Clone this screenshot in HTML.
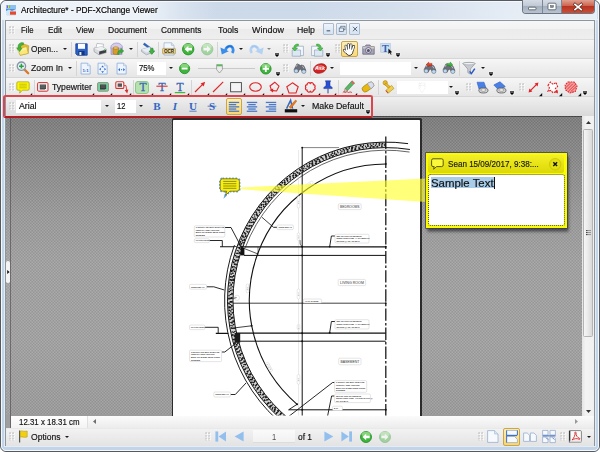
<!DOCTYPE html>
<html><head><meta charset="utf-8"><title>Architecture* - PDF-XChange Viewer</title>
<style>
*{box-sizing:border-box;margin:0;padding:0}
html,body{width:600px;height:452px;overflow:hidden;background:#fff}
body{position:relative;font-family:"Liberation Sans","DejaVu Sans",sans-serif;font-size:8.9px;color:#151515}
.a,.t,svg{position:absolute}
svg{overflow:visible}
#win{left:0;top:0;width:600px;height:452px;border:1px solid #565a60;border-radius:6px;background:linear-gradient(180deg,#ccd9e9 0,#cddae9 18px,#c6d6e8 40px,#c3d4e8 100%)}
#winhi{left:1px;top:1px;width:598px;height:450px;border:1px solid #f4f9fd;border-radius:5px}
#client{left:5px;top:20px;width:590px;height:426px;background:#efefef;border:1px solid #8d959d;box-shadow:0 0 0 1px rgba(238,244,250,0.75)}
.row{left:6px;width:588px}
.t{white-space:nowrap;line-height:12px;transform-origin:0 50%;-webkit-text-stroke:0.18px currentColor}
.grip{width:6px;height:8.4px;background:radial-gradient(circle at 1.1px 1.1px,#cdcdcd 0.7px,transparent 1.1px) 0 0/3px 2.8px,radial-gradient(circle at 1.8px 1.8px,#fff 0.75px,transparent 1.15px) 0 0/3px 2.8px}
.sep{width:1px;background:#d4d4d4;height:15px}
.dd{width:0;height:0;border-left:2.4px solid transparent;border-right:2.4px solid transparent;border-top:2.8px solid #1a1a1a}
.chev{width:4px;height:4.2px;background:linear-gradient(180deg,#555 0,#555 1.8px,transparent 1.8px);filter:drop-shadow(0 0 0.8px #fff)}.chev:after{content:'';position:absolute;left:0;top:1.7px;border-left:2px solid transparent;border-right:2px solid transparent;border-top:2.5px solid #000}
.box{background:#fff}
</style></head>
<body>
<div id="win" class="a"></div><div id="winhi" class="a"></div>
<div class="a" style="left:2px;top:2px;width:215px;height:18px;background:linear-gradient(90deg,rgba(240,245,250,0.95) 0,rgba(238,243,249,0.92) 145px,rgba(225,234,244,0.6) 180px,rgba(205,218,233,0) 215px);border-radius:4px 0 0 0;"></div>
<div class="a" style="left:300px;top:2px;width:297px;height:17px;background:linear-gradient(90deg,rgba(232,238,246,0) 0,rgba(232,238,246,0.35) 110px,rgba(234,240,247,0.85) 215px,rgba(234,240,247,0.9) 100%);border-radius:0 4px 0 0;"></div>
<div class="a" style="left:2px;top:18.6px;width:596px;height:1.4px;background:rgba(236,241,247,0.85);"></div>
<svg style="left:6.4px;top:5px" width="10" height="10.4" viewBox="0 0 10 10.4"><rect x="0" y="0.3" width="10" height="10" rx="1" fill="#8a98a8" opacity="0.5"/><rect x="0" y="0" width="10" height="10" rx="1" fill="#4f90d8"/><rect x="0" y="0" width="10" height="4" fill="#8cc0ee"/><rect x="1" y="0.5" width="1" height="2.5" fill="#a050d0"/><rect x="2" y="0.5" width="1" height="2.5" fill="#e8d840"/><rect x="3" y="0.5" width="1" height="2.5" fill="#60c860"/><path d="M0 6 L3 4.5 L6 6 L10 4 V10 H0Z" fill="#cfe6f8"/><rect x="4" y="6.5" width="6" height="3.2" fill="#e8482c"/></svg>
<div class="t" style="left:21px;top:4.3px;font-size:8.9px;transform:scaleX(0.937);color:#000;text-shadow:0 0 3px #fff,0 0 5px #fff;">Architecture* - PDF-XChange Viewer</div>
<div class="a" style="left:522px;top:0;width:73px;height:14px;border:1px solid #6c7683;border-top:none;border-radius:0 0 4px 4px;overflow:hidden;background:#c9d3df"><div class="a" style="left:0;top:0;width:20px;height:13px;background:linear-gradient(180deg,#d6dce5 0,#c0c9d5 45%,#a5b0bf 50%,#b9c3d0 100%);border-right:1px solid #7a8694"></div><div class="a" style="left:20px;top:0;width:19px;height:13px;background:linear-gradient(180deg,#d6dce5 0,#c0c9d5 45%,#a5b0bf 50%,#b9c3d0 100%);border-right:1px solid #7a8694"></div><div class="a" style="left:39px;top:0;width:33px;height:13px;background:linear-gradient(180deg,#e0a090 0,#cc6450 45%,#b83420 50%,#c8503a 100%)"></div></div>
<svg style="left:522px;top:0px" width="73" height="14" viewBox="0 0 73 14"><rect x="6.5" y="7.2" width="7.5" height="2.6" rx="0.8" fill="#fff" stroke="#4c5560" stroke-width="0.8"/><rect x="26" y="3.2" width="8" height="6.6" rx="1" fill="#fff" stroke="#4c5560" stroke-width="0.8"/><rect x="28.6" y="5.6" width="2.8" height="1.8" fill="#7d8896" stroke="#4c5560" stroke-width="0.5"/><path d="M53 4.4 L59.2 9.6 M59.2 4.4 L53 9.6" stroke="#5a2a24" stroke-width="3" stroke-linecap="square"/><path d="M53 4.4 L59.2 9.6 M59.2 4.4 L53 9.6" stroke="#fff" stroke-width="1.7" stroke-linecap="square"/></svg>
<div id="client" class="a"></div>
<div class="a row" style="left:6px;top:21px;width:588px;height:18.5px;background:linear-gradient(180deg,#f7f7f7 0,#f2f2f2 42%,#ebebeb 44%,#eeeeee 100%);border-bottom:1px solid #dcdcdc;"></div>
<div class="a row" style="left:6px;top:39.5px;width:588px;height:19px;background:linear-gradient(180deg,#f6f6f6,#e6e6e6);border-bottom:1px solid #d6d6d6;"></div>
<div class="a row" style="left:6px;top:58.5px;width:588px;height:19px;background:linear-gradient(180deg,#f6f6f6,#e6e6e6);border-bottom:1px solid #d6d6d6;"></div>
<div class="a row" style="left:6px;top:77.5px;width:588px;height:19px;background:linear-gradient(180deg,#f6f6f6,#e6e6e6);border-bottom:1px solid #d6d6d6;"></div>
<div class="a row" style="left:6px;top:96.5px;width:588px;height:20px;background:linear-gradient(180deg,#efefef,#d9d9d9);border-bottom:1px solid #c8c8c8;"></div>
<div class="a grip" style="left:8.6px;top:25.7px;"></div>
<div class="t" style="left:20.5px;top:24.3px;font-size:8.9px;transform:scaleX(0.872);">File</div>
<div class="t" style="left:47.5px;top:24.3px;font-size:8.9px;transform:scaleX(0.913);">Edit</div>
<div class="t" style="left:75.5px;top:24.3px;font-size:8.9px;transform:scaleX(0.941);">View</div>
<div class="t" style="left:107.5px;top:24.3px;font-size:8.9px;transform:scaleX(0.962);">Document</div>
<div class="t" style="left:161px;top:24.3px;font-size:8.9px;transform:scaleX(0.941);">Comments</div>
<div class="t" style="left:217.5px;top:24.3px;font-size:8.9px;transform:scaleX(0.987);">Tools</div>
<div class="t" style="left:251.5px;top:24.3px;font-size:8.9px;transform:scaleX(1.011);">Window</div>
<div class="t" style="left:297.2px;top:24.3px;font-size:8.9px;transform:scaleX(0.983);">Help</div>
<div class="a" style="left:322.5px;top:23px;width:11.5px;height:11.7px;background:linear-gradient(180deg,#eef4fb,#d5e2f1);border:1px solid #a9bbd0;border-radius:1px;"></div>
<div class="a" style="left:335.5px;top:23px;width:11.5px;height:11.7px;background:linear-gradient(180deg,#eef4fb,#d5e2f1);border:1px solid #a9bbd0;border-radius:1px;"></div>
<div class="a" style="left:348.8px;top:23px;width:11.5px;height:11.7px;background:linear-gradient(180deg,#eef4fb,#d5e2f1);border:1px solid #a9bbd0;border-radius:1px;"></div>
<svg style="left:322.5px;top:23px" width="40" height="12" viewBox="0 0 40 12"><rect x="3.6" y="7.2" width="3.6" height="1.2" fill="#55657c"/><rect x="17.8" y="3.2" width="4.2" height="3.6" fill="none" stroke="#55657c" stroke-width="0.7"/><rect x="16.2" y="5" width="4.2" height="3.6" fill="#e3ecf7" stroke="#55657c" stroke-width="0.7"/><path d="M30 3.8 L34.2 8.2 M34.2 3.8 L30 8.2" stroke="#55657c" stroke-width="1"/></svg>
<div class="a grip" style="left:8.6px;top:44.4px;"></div>
<svg style="left:16.2px;top:42.2px" width="14" height="14" viewBox="0 0 14 14"><path d="M3 3.4 L7 1.8 L12.8 3.8 L12.2 11.4 L4.2 13.2Z" fill="#e4c030" stroke="#a8881c" stroke-width="0.5"/><path d="M1.2 6.8 L10.6 4.6 L12.3 11.4 L4.2 13.3Z" fill="#fae778" stroke="#b89a20" stroke-width="0.5"/><path d="M1.6 7.4 L10.2 5.4 L10.8 7.6 L2.4 9.8Z" fill="#fdf2a8" opacity="0.8"/><path d="M7.4 0.8 C3.6 0 1.4 2.8 2.4 6 L0.6 5.8 L3.6 9.6 L6 6.2 L4.4 6.2 C4 4.4 5 2.8 7.4 2.6Z" fill="#44b83c" stroke="#1f7f25" stroke-width="0.5"/></svg>
<div class="t" style="left:31px;top:43px;font-size:8.9px;transform:scaleX(0.925);">Open...</div>
<div class="a dd" style="left:63.1px;top:47.9px;border-top-color:#1a1a1a;"></div>
<div class="a sep" style="left:70.5px;top:41.5px;"></div>
<svg style="left:75px;top:42.5px" width="13" height="13" viewBox="0 0 13 13"><path d="M0.8 0.8 H12.2 V12.2 H2.2 L0.8 10.8Z" fill="#2a62c8" stroke="#163f94" stroke-width="0.8"/><rect x="3" y="0.8" width="7" height="5" fill="#fff"/><rect x="3.4" y="8" width="6.2" height="4.2" fill="#16367c"/><rect x="4.4" y="9" width="2" height="3" fill="#dfe8f6"/></svg>
<svg style="left:93px;top:42px" width="14" height="14" viewBox="0 0 14 14"><path d="M4 1.4 L10.6 2.2 L9.8 6.4 L3 5.6Z" fill="#fff" stroke="#9aa0a8" stroke-width="0.6"/><path d="M1 6 L9 4.8 L13.4 7.2 L13.4 10.6 L6 12.8 L1 9.6Z" fill="#d8dade" stroke="#8c9098" stroke-width="0.6"/><path d="M1 6 L9 4.8 L13.4 7.2 L6 8.8Z" fill="#eef0f2"/><path d="M6.2 9.6 L13 7.8 L13 10.4 L6.2 12.6Z" fill="#3c3e44"/><circle cx="11.6" cy="8" r="0.8" fill="#38c038"/></svg>
<svg style="left:110px;top:42px" width="14" height="14" viewBox="0 0 14 14"><ellipse cx="6.6" cy="5.4" rx="5.8" ry="4.4" fill="#d6cdec" stroke="#9a8cc4" stroke-width="0.7"/><path d="M1 5.6 V12.4 H12 V5.6" fill="#c4b8e2" stroke="#8a7cb8" stroke-width="0.6"/><path d="M3 6 V11.4 C3 12.8 8.6 12.8 8.6 11.4 V6Z" fill="#d89c28" stroke="#946410" stroke-width="0.5"/><ellipse cx="5.8" cy="6" rx="2.8" ry="1.2" fill="#f0c860" stroke="#946410" stroke-width="0.5"/><path d="M7.6 12.4 C7.4 9.4 9 8 10.8 8 V6.2 L13.8 9 L10.8 11.6 V10 C9.8 10 9.2 10.8 9.2 12.4Z" fill="#38b038" stroke="#1e7a22" stroke-width="0.4"/></svg>
<div class="a dd" style="left:128.6px;top:47.9px;border-top-color:#1a1a1a;"></div>
<div class="a sep" style="left:136.5px;top:41.5px;"></div>
<svg style="left:141px;top:42px" width="14" height="14" viewBox="0 0 14 14"><path d="M3.4 1 L9.4 5.4 L8 6.4 L2.4 2.6Z" fill="#2c66cc" stroke="#1b4696" stroke-width="0.5"/><path d="M0.6 7.6 L8.4 5.2 L13 8 L13 10 L5.4 12.8 L0.6 9.6Z" fill="#cfd6e0" stroke="#8a94a4" stroke-width="0.6"/><path d="M0.6 7.6 L8.4 5.2 L13 8 L5.4 10.6Z" fill="#e8edf4"/><path d="M9.6 6.2 H12 V9 H13.6 L10.8 12.4 L8 9 H9.6Z" fill="#3cb83c" stroke="#1f7a25" stroke-width="0.5"/></svg>
<div class="a sep" style="left:158px;top:41.5px;"></div>
<svg style="left:162px;top:42px" width="14" height="14" viewBox="0 0 14 14"><path d="M2 0.8 H9.4 L12 3.4 V13.2 H2Z" fill="#f4f8fc" stroke="#9ab0cc" stroke-width="0.7"/><path d="M9.4 0.8 V3.4 H12" fill="#d6e2f0" stroke="#9ab0cc" stroke-width="0.5"/><rect x="0.6" y="6.4" width="12.8" height="5.4" rx="0.6" fill="#f0d890" stroke="#8a7430" stroke-width="0.5"/><text x="7" y="10.7" font-size="4.6" font-weight="bold" font-family="Liberation Sans,sans-serif" text-anchor="middle" fill="#222">OCR</text></svg>
<svg style="left:181.8px;top:42.8px" width="12.4" height="12.4" viewBox="0 0 12.4 12.4"><g opacity="1"><circle cx="6.2" cy="6.2" r="5.7" fill="#3eb53a" stroke="#1f8a26" stroke-width="0.8"/><ellipse cx="6.2" cy="3.41" rx="4.464" ry="2.604" fill="#9be08c" opacity="0.75"/><path d="M2.6 6.2 L6.4 2.8 V5 H10 V7.4 H6.4 V9.6Z" fill="#fff"/></g></svg>
<svg style="left:200.8px;top:42.8px" width="12.4" height="12.4" viewBox="0 0 12.4 12.4"><g opacity="0.42"><circle cx="6.2" cy="6.2" r="5.7" fill="#3eb53a" stroke="#1f8a26" stroke-width="0.8"/><ellipse cx="6.2" cy="3.41" rx="4.464" ry="2.604" fill="#9be08c" opacity="0.75"/><path d="M9.8 6.2 L6 2.8 V5 H2.4 V7.4 H6 V9.6Z" fill="#fff"/></g></svg>
<div class="a sep" style="left:217px;top:41.5px;"></div>
<svg style="left:220.4px;top:42.8px" width="15" height="13" viewBox="0 0 15 13"><g><path d="M5.4 8 C5.6 3.6 10.6 1.6 12.6 4.8 C13.6 6.6 13.2 8.6 12.2 10" fill="none" stroke="#3a8eea" stroke-width="2.7"/><path d="M0.4 4.4 L1.8 11.4 L8.8 8.2Z" fill="#3a8eea"/><path d="M6.4 5 C8 2.6 11.4 2.4 12.6 4.8" fill="none" stroke="#1f6fd6" stroke-width="1.1"/></g></svg>
<div class="a dd" style="left:238.8px;top:47.9px;border-top-color:#1a1a1a;"></div>
<svg style="left:248.6px;top:42.8px" width="15" height="13" viewBox="0 0 15 13"><g transform="translate(15,0) scale(-1,1)"><path d="M5.4 8 C5.6 3.6 10.6 1.6 12.6 4.8 C13.6 6.6 13.2 8.6 12.2 10" fill="none" stroke="#b4d2f4" stroke-width="2.7"/><path d="M0.4 4.4 L1.8 11.4 L8.8 8.2Z" fill="#b4d2f4"/><path d="M6.4 5 C8 2.6 11.4 2.4 12.6 4.8" fill="none" stroke="#a2c6f0" stroke-width="1.1"/></g></svg>
<div class="a dd" style="left:266.6px;top:47.9px;border-top-color:#8a8a8a;"></div>
<div class="a chev" style="left:275px;top:52.9px;"></div>
<div class="a grip" style="left:282.6px;top:44.4px;"></div>
<svg style="left:291px;top:42.8px" width="14" height="14" viewBox="0 0 14 14"><g><path d="M3.6 3.2 H12.4 V12.6 H3.6Z" fill="#f6f9fc" stroke="#8fa3bb" stroke-width="0.7"/><path d="M1.2 7 H9.6 V13.2 H1.2Z" fill="#dde7f2" stroke="#8fa3bb" stroke-width="0.7"/><path d="M7.4 1 C4.4 0.8 2.6 2.6 2.8 5 L1 5 L3.8 8 L6.6 5 L4.8 5 C4.8 3.6 5.8 2.8 7.4 2.8Z" fill="#52c44e" stroke="#2a9030" stroke-width="0.5"/></g></svg>
<svg style="left:310px;top:42.8px" width="14" height="14" viewBox="0 0 14 14"><g transform="translate(14,0) scale(-1,1)"><path d="M3.6 3.2 H12.4 V12.6 H3.6Z" fill="#f6f9fc" stroke="#8fa3bb" stroke-width="0.7"/><path d="M1.2 7 H9.6 V13.2 H1.2Z" fill="#dde7f2" stroke="#8fa3bb" stroke-width="0.7"/><path d="M7.4 1 C4.4 0.8 2.6 2.6 2.8 5 L1 5 L3.8 8 L6.6 5 L4.8 5 C4.8 3.6 5.8 2.8 7.4 2.8Z" fill="#52c44e" stroke="#2a9030" stroke-width="0.5"/></g></svg>
<div class="a chev" style="left:326px;top:52.9px;"></div>
<div class="a grip" style="left:334.6px;top:44.4px;"></div>
<div class="a" style="left:341px;top:41px;width:16.6px;height:16.4px;background:linear-gradient(180deg,#fdeeb8,#f9d978);border:1px solid #c9a64a;border-radius:2px;"></div>
<svg style="left:343px;top:42.7px" width="13" height="13" viewBox="0 0 13 13"><path d="M3.6 7.4 L2.9 3 M5.6 6.4 L5.3 1.6 M7.6 6.4 L8 1.8 M9.5 7.2 L10.6 3.4 M3.4 9.4 L1.3 7.2" stroke="#2a2a2a" stroke-width="2.7" stroke-linecap="round" fill="none"/><path d="M3 7 Q6.4 4.6 10 7 L9.6 10 Q8.6 12.6 6 12.4 Q3.6 12 3 9.6Z" fill="#fff" stroke="#2a2a2a" stroke-width="1"/><path d="M3.6 7.4 L2.9 3 M5.6 6.4 L5.3 1.6 M7.6 6.4 L8 1.8 M9.5 7.2 L10.6 3.4 M3.4 9.4 L1.3 7.2" stroke="#fff" stroke-width="1.5" stroke-linecap="round" fill="none"/><path d="M3.4 7.2 Q6.4 5.4 9.6 7.2 L9.2 10 Q8.4 11.8 6 11.8 Q4 11.6 3.6 9.6Z" fill="#fff"/></svg>
<svg style="left:361.6px;top:42.5px" width="13" height="13" viewBox="0 0 13 13"><path d="M0.8 3.6 H3 L4 2 H8 L9 3.6 H12.2 V11.2 H0.8Z" fill="#a8a4b8" stroke="#5e5a70" stroke-width="0.7"/><rect x="0.8" y="3.6" width="11.4" height="2" fill="#c9c6d6"/><circle cx="6.4" cy="7.4" r="2.9" fill="#dcdce6" stroke="#4c4860" stroke-width="0.7"/><circle cx="6.4" cy="7.4" r="1.5" fill="#54506a"/><rect x="9.6" y="4.2" width="1.6" height="1" fill="#f0d060"/></svg>
<svg style="left:379.5px;top:42px" width="13" height="13" viewBox="0 0 13 13"><rect x="0.8" y="1.6" width="9.4" height="8.6" fill="#cfe0f4" stroke="#9bb4d4" stroke-width="0.5"/><text x="5.4" y="9.6" font-size="10" font-weight="bold" font-family="Liberation Serif,serif" text-anchor="middle" fill="#3060b0">T</text><path d="M8.4 6.4 L8.4 12 L9.8 10.8 L10.8 12.8 L11.6 12.4 L10.6 10.4 L12.2 10.2Z" fill="#111"/></svg>
<div class="a chev" style="left:395.5px;top:52.9px;"></div>
<div class="a grip" style="left:8.6px;top:63.8px;"></div>
<svg style="left:15.6px;top:61.2px" width="15" height="15" viewBox="0 0 15 15"><circle cx="5.4" cy="5.2" r="4.2" fill="#e4f0fb" stroke="#8a96a8" stroke-width="1.3"/><path d="M8.6 8.6 L12.2 12.2" stroke="#e07820" stroke-width="2.3" stroke-linecap="round"/><path d="M8.2 8.2 L9.6 9.6" stroke="#8a96a8" stroke-width="1.6"/><path d="M5.4 2.8 V7.6 M3 5.2 H7.8" stroke="#2da23a" stroke-width="1.5"/></svg>
<div class="t" style="left:31px;top:62.4px;font-size:8.9px;transform:scaleX(0.980);">Zoom In</div>
<div class="a dd" style="left:67.8px;top:67.3px;border-top-color:#1a1a1a;"></div>
<div class="a sep" style="left:75.5px;top:60.9px;"></div>
<svg style="left:79.6px;top:61.8px" width="11.4" height="13.2" viewBox="0 0 13 14"><path d="M1.2 0.8 H8.6 L11.6 3.8 V13.2 H1.2Z" fill="#eef5fd" stroke="#7ea2d8" stroke-width="0.8"/><path d="M8.6 0.8 V3.8 H11.6" fill="#d4e2f2" stroke="#8eaad0" stroke-width="0.5"/><text x="6.4" y="10.6" font-size="5" font-weight="bold" font-family="Liberation Sans,sans-serif" text-anchor="middle" fill="#2c62c0">1:1</text></svg>
<svg style="left:97.4px;top:61.8px" width="11.4" height="13.2" viewBox="0 0 13 14"><path d="M1.2 0.8 H8.6 L11.6 3.8 V13.2 H1.2Z" fill="#eef5fd" stroke="#7ea2d8" stroke-width="0.8"/><path d="M8.6 0.8 V3.8 H11.6" fill="#d4e2f2" stroke="#8eaad0" stroke-width="0.5"/><path d="M6.4 3.4 L8 5.4 H4.8Z M6.4 12 L8 10 H4.8Z M2.4 7.7 L4.4 6.1 V9.3Z M10.4 7.7 L8.4 6.1 V9.3Z" fill="#2c6ad0"/></svg>
<svg style="left:116px;top:61.8px" width="11.4" height="13.2" viewBox="0 0 13 14"><path d="M1.2 0.8 H8.6 L11.6 3.8 V13.2 H1.2Z" fill="#eef5fd" stroke="#7ea2d8" stroke-width="0.8"/><path d="M8.6 0.8 V3.8 H11.6" fill="#d4e2f2" stroke="#8eaad0" stroke-width="0.5"/><path d="M2.4 8.2 L4.6 6.4 V10Z M10.4 8.2 L8.2 6.4 V10Z" fill="#2c6ad0"/><rect x="5.8" y="7.6" width="1.2" height="1.2" fill="#2c6ad0"/></svg>
<div class="a box" style="left:136.6px;top:62px;width:29.5px;height:13px;"></div>
<div class="t" style="left:139px;top:62.4px;font-size:8.9px;transform:scaleX(0.870);">75%</div>
<div class="a dd" style="left:168.6px;top:67.3px;border-top-color:#1a1a1a;"></div>
<svg style="left:179.4px;top:62.8px" width="11.2" height="11.2" viewBox="0 0 11.2 11.2"><g opacity="1"><circle cx="5.6" cy="5.6" r="5.1" fill="#3eb53a" stroke="#1f8a26" stroke-width="0.8"/><ellipse cx="5.6" cy="3.08" rx="4.032" ry="2.352" fill="#9be08c" opacity="0.75"/><rect x="2.6" y="4.7" width="6" height="1.9" rx="0.4" fill="#fff"/></g></svg>
<div class="a" style="left:198px;top:68.1px;width:57px;height:1px;background:#c9c9c9;"></div>
<svg style="left:215.5px;top:63.8px" width="7" height="10" viewBox="0 0 7 10"><path d="M0.6 0.6 H6.4 V5.6 L3.5 9 L0.6 5.6Z" fill="#ececec" stroke="#8a8a8a" stroke-width="0.7"/><rect x="1" y="0.8" width="5" height="1.5" fill="#4cc04c"/></svg>
<svg style="left:259.6px;top:62.6px" width="11.6" height="11.6" viewBox="0 0 11.6 11.6"><g opacity="1"><circle cx="5.8" cy="5.8" r="5.3" fill="#3eb53a" stroke="#1f8a26" stroke-width="0.8"/><ellipse cx="5.8" cy="3.19" rx="4.176" ry="2.436" fill="#9be08c" opacity="0.75"/><path d="M4.9 2.6 H6.7 V4.9 H9 V6.7 H6.7 V9 H4.9 V6.7 H2.6 V4.9 H4.9Z" fill="#fff"/></g></svg>
<div class="a chev" style="left:276px;top:72.4px;"></div>
<div class="a grip" style="left:282.6px;top:63.8px;"></div>
<svg style="left:292.6px;top:62.4px" width="14" height="12" viewBox="0 0 14 12"><path d="M1.2 7.4 L4 1.8 L6.4 2.8 L7.4 3.6 L8.6 3 L10.8 3.8 L13 8.6 L10 10.8 L7.8 7.2 L6.6 7.4 L5.2 10.2 L1.6 10Z" fill="#6c6e78" stroke="#3c3e46" stroke-width="0.5"/><path d="M3 4.8 L4.4 2.6 M9.4 3.8 L11 6.4" stroke="#c4c6cc" stroke-width="0.9"/><ellipse cx="3.2" cy="9" rx="2.1" ry="1.9" fill="#b8d8f4" stroke="#55606c" stroke-width="0.5"/><ellipse cx="10.8" cy="9.6" rx="2.1" ry="1.9" fill="#b8d8f4" stroke="#55606c" stroke-width="0.5"/></svg>
<div class="a sep" style="left:309.5px;top:60.9px;"></div>
<svg style="left:313px;top:62.9px" width="14" height="11" viewBox="0 0 14 11"><ellipse cx="7" cy="5.5" rx="6.6" ry="4.6" fill="#d42020" stroke="#8a1010" stroke-width="0.6" transform="rotate(-18 7 5.5)"/><ellipse cx="6" cy="3.8" rx="4.4" ry="1.8" fill="#f08080" opacity="0.7" transform="rotate(-18 7 5.5)"/><text x="7" y="7.4" font-size="5.4" font-weight="bold" font-style="italic" font-family="Liberation Sans,sans-serif" text-anchor="middle" fill="#fff">Ask</text></svg>
<div class="a dd" style="left:330px;top:67.3px;border-top-color:#1a1a1a;"></div>
<div class="a box" style="left:339.6px;top:62px;width:71px;height:13px;"></div>
<div class="a dd" style="left:414.2px;top:67.3px;border-top-color:#1a1a1a;"></div>
<svg style="left:423.4px;top:62.4px" width="14" height="12" viewBox="0 0 14 12"><path d="M1.2 7.4 L4 1.8 L6.4 2.8 L7.4 3.6 L8.6 3 L10.8 3.8 L13 8.6 L10 10.8 L7.8 7.2 L6.6 7.4 L5.2 10.2 L1.6 10Z" fill="#6c6e78" stroke="#3c3e46" stroke-width="0.5"/><path d="M3 4.8 L4.4 2.6 M9.4 3.8 L11 6.4" stroke="#c4c6cc" stroke-width="0.9"/><ellipse cx="3.2" cy="9" rx="2.1" ry="1.9" fill="#b8d8f4" stroke="#55606c" stroke-width="0.5"/><ellipse cx="10.8" cy="9.6" rx="2.1" ry="1.9" fill="#b8d8f4" stroke="#55606c" stroke-width="0.5"/><path d="M3.4 2.4 L5.8 0 V1.4 H9 V3.6 H5.8 V5Z" fill="#e84020" stroke="#a02010" stroke-width="0.4"/></svg>
<svg style="left:441.6px;top:62.4px" width="14" height="12" viewBox="0 0 14 12"><path d="M1.2 7.4 L4 1.8 L6.4 2.8 L7.4 3.6 L8.6 3 L10.8 3.8 L13 8.6 L10 10.8 L7.8 7.2 L6.6 7.4 L5.2 10.2 L1.6 10Z" fill="#6c6e78" stroke="#3c3e46" stroke-width="0.5"/><path d="M3 4.8 L4.4 2.6 M9.4 3.8 L11 6.4" stroke="#c4c6cc" stroke-width="0.9"/><ellipse cx="3.2" cy="9" rx="2.1" ry="1.9" fill="#b8d8f4" stroke="#55606c" stroke-width="0.5"/><ellipse cx="10.8" cy="9.6" rx="2.1" ry="1.9" fill="#b8d8f4" stroke="#55606c" stroke-width="0.5"/><path d="M10.6 2.4 L8.2 0 V1.4 H5 V3.6 H8.2 V5Z" fill="#38b838" stroke="#1f7a25" stroke-width="0.4"/></svg>
<div class="a sep" style="left:459px;top:60.9px;"></div>
<svg style="left:462px;top:61.9px" width="15" height="13" viewBox="0 0 15 13"><path d="M0.8 1.4 C4 0 10 0 13.2 1.4 L8.4 7 V12.2 L5.8 10.6 V7Z" fill="#c8ccd2" stroke="#80868e" stroke-width="0.6"/><ellipse cx="7" cy="1.6" rx="6" ry="1.2" fill="#eef0f2" stroke="#80868e" stroke-width="0.4"/><path d="M7.6 9.4 L9.4 11.6 L12.8 6.6" fill="none" stroke="#2858c8" stroke-width="1.5"/></svg>
<div class="a dd" style="left:480.8px;top:67.3px;border-top-color:#1a1a1a;"></div>
<div class="a chev" style="left:488.6px;top:72.4px;"></div>
<div class="a grip" style="left:8.6px;top:82.8px;"></div>
<svg style="left:15.6px;top:80.8px" width="14" height="13" viewBox="0 0 14 13"><path d="M2 0.8 H12 Q13.2 0.8 13.2 2 V8 Q13.2 9.2 12 9.2 H6.4 L3.6 12.2 L4.2 9.2 H2 Q0.8 9.2 0.8 8 V2 Q0.8 0.8 2 0.8Z" fill="#fbf600" stroke="#989008" stroke-width="0.6"/><path d="M3.2 3.2 H10.8 M3.2 5 H10.8 M3.2 6.8 H10.8" stroke="#b0a818" stroke-width="0.7"/></svg>
<svg style="left:28.5px;top:92.7px" width="3.2" height="3.2" viewBox="0 0 3.2 3.2"><path d="M3.2 0 V3.2 H0Z" fill="#111"/></svg>
<div class="a sep" style="left:33.5px;top:79.9px;"></div>
<svg style="left:37px;top:82.2px" width="11.6" height="10" viewBox="0 0 11.6 10"><rect x="0.6" y="0.6" width="10.4" height="8.6" rx="1" fill="#e8f6f8" stroke="#e02828" stroke-width="1"/><path d="M2.8 2.4 H9 V6.2 L7.8 7.4 H2.8Z" fill="#4a4a4a"/><path d="M3.4 3.8 H8.4 M3.4 5.2 H8.4" stroke="#8a8a8a" stroke-width="0.5"/></svg>
<div class="t" style="left:52.4px;top:81.4px;font-size:8.9px;transform:scaleX(0.974);">Typewriter</div>
<svg style="left:91px;top:92.7px" width="3.2" height="3.2" viewBox="0 0 3.2 3.2"><path d="M3.2 0 V3.2 H0Z" fill="#111"/></svg>
<svg style="left:97px;top:82.2px" width="12" height="10" viewBox="0 0 12 10"><rect x="0.6" y="0.6" width="10.8" height="8.6" rx="1" fill="#74d4a4" stroke="#8c8870" stroke-width="0.9"/><path d="M3 2.4 H9.2 V6.2 L8 7.4 H3Z" fill="#3c3c3c"/><path d="M3.6 3.8 H8.6 M3.6 5.2 H8.6" stroke="#808080" stroke-width="0.5"/></svg>
<svg style="left:109px;top:92.7px" width="3.2" height="3.2" viewBox="0 0 3.2 3.2"><path d="M3.2 0 V3.2 H0Z" fill="#111"/></svg>
<svg style="left:114.6px;top:81.4px" width="14" height="13" viewBox="0 0 14 13"><rect x="0.8" y="0.8" width="8" height="6.6" rx="1" fill="#fff" stroke="#d83030" stroke-width="1.1"/><rect x="2.6" y="2.4" width="4.4" height="3.4" fill="#555"/><path d="M9 4.6 H11 L11.8 10.4" fill="none" stroke="#d83030" stroke-width="0.9"/><path d="M9.6 9 L12.2 12.4 L13.4 8.6Z" fill="#d83030"/></svg>
<svg style="left:128px;top:92.7px" width="3.2" height="3.2" viewBox="0 0 3.2 3.2"><path d="M3.2 0 V3.2 H0Z" fill="#111"/></svg>
<div class="a sep" style="left:132.5px;top:79.9px;"></div>
<div class="a" style="left:135.4px;top:80.6px;width:14px;height:13.6px;background:#b6e2b0;border:1px solid #8cc888;border-radius:3px;"></div>
<svg style="left:136.2px;top:80.4px" width="14" height="14" viewBox="0 0 14 14"><text x="7" y="10.9" font-size="11.6" font-family="Liberation Serif,serif" text-anchor="middle" fill="#3a66b4" stroke="#3a66b4" stroke-width="0.3">T</text></svg>
<svg style="left:149.5px;top:92.7px" width="3.2" height="3.2" viewBox="0 0 3.2 3.2"><path d="M3.2 0 V3.2 H0Z" fill="#111"/></svg>
<svg style="left:154.6px;top:80.4px" width="14" height="14" viewBox="0 0 14 14"><text x="7" y="10.9" font-size="11.6" font-family="Liberation Serif,serif" text-anchor="middle" fill="#3a66b4" stroke="#3a66b4" stroke-width="0.3">T</text><path d="M1.4 6.2 H12.6" stroke="#e03030" stroke-width="1.1"/></svg>
<svg style="left:167.5px;top:92.7px" width="3.2" height="3.2" viewBox="0 0 3.2 3.2"><path d="M3.2 0 V3.2 H0Z" fill="#111"/></svg>
<svg style="left:173.2px;top:80.4px" width="14" height="14" viewBox="0 0 14 14"><text x="7" y="10.9" font-size="11.6" font-family="Liberation Serif,serif" text-anchor="middle" fill="#3a66b4" stroke="#3a66b4" stroke-width="0.3">T</text><path d="M1.8 12.6 H12.2" stroke="#38c038" stroke-width="1.2"/></svg>
<svg style="left:186px;top:92.7px" width="3.2" height="3.2" viewBox="0 0 3.2 3.2"><path d="M3.2 0 V3.2 H0Z" fill="#111"/></svg>
<div class="a sep" style="left:190.5px;top:79.9px;"></div>
<svg style="left:193.6px;top:81.4px" width="12" height="12" viewBox="0 0 12 12"><path d="M1 11 L9.4 2.6" stroke="#e02428" stroke-width="1.1"/><path d="M11.2 0.8 L6.6 2.4 L9.6 5.4Z" fill="#e02428"/></svg>
<svg style="left:205.5px;top:92.7px" width="3.2" height="3.2" viewBox="0 0 3.2 3.2"><path d="M3.2 0 V3.2 H0Z" fill="#111"/></svg>
<svg style="left:211.6px;top:81.4px" width="12" height="12" viewBox="0 0 12 12"><path d="M1 11 L11.2 0.8" stroke="#e02428" stroke-width="1.1"/></svg>
<svg style="left:224px;top:92.7px" width="3.2" height="3.2" viewBox="0 0 3.2 3.2"><path d="M3.2 0 V3.2 H0Z" fill="#111"/></svg>
<svg style="left:230px;top:82.2px" width="12" height="10.4" viewBox="0 0 12 10.4"><rect x="0.6" y="0.6" width="10.8" height="9.2" fill="#f4f4f4" stroke="#444" stroke-width="0.9"/></svg>
<svg style="left:242px;top:92.7px" width="3.2" height="3.2" viewBox="0 0 3.2 3.2"><path d="M3.2 0 V3.2 H0Z" fill="#111"/></svg>
<svg style="left:248.6px;top:82.4px" width="13" height="10" viewBox="0 0 13 10"><ellipse cx="6.5" cy="5" rx="5.8" ry="4.2" fill="none" stroke="#e02428" stroke-width="1.1"/></svg>
<svg style="left:261px;top:92.7px" width="3.2" height="3.2" viewBox="0 0 3.2 3.2"><path d="M3.2 0 V3.2 H0Z" fill="#111"/></svg>
<svg style="left:267px;top:81.4px" width="13" height="12" viewBox="0 0 13 12"><path d="M4.6 9.4 L3 5 L7.8 1.2 L12 5.2 L9.6 10 L6 9.6" fill="none" stroke="#e02428" stroke-width="1.1"/><path d="M2.6 9 L6.2 7.6 L6 11.4Z" fill="#e02428"/></svg>
<svg style="left:280px;top:92.7px" width="3.2" height="3.2" viewBox="0 0 3.2 3.2"><path d="M3.2 0 V3.2 H0Z" fill="#111"/></svg>
<svg style="left:285.6px;top:81.6px" width="13" height="12" viewBox="0 0 13 12"><path d="M6.5 0.8 L12.2 4.8 L10 11 H3 L0.8 4.8Z" fill="none" stroke="#e02428" stroke-width="1.1"/></svg>
<svg style="left:298.5px;top:92.7px" width="3.2" height="3.2" viewBox="0 0 3.2 3.2"><path d="M3.2 0 V3.2 H0Z" fill="#111"/></svg>
<svg style="left:303px;top:81px" width="14.6" height="12.8" viewBox="0 0 13 11.4"><path d="M10.50 5.70 A1.55 1.55 0 0 1 9.33 8.17 A1.55 1.55 0 0 1 6.50 9.20 A1.55 1.55 0 0 1 3.67 8.17 A1.55 1.55 0 0 1 2.50 5.70 A1.55 1.55 0 0 1 3.67 3.23 A1.55 1.55 0 0 1 6.50 2.20 A1.55 1.55 0 0 1 9.33 3.23 A1.55 1.55 0 0 1 10.50 5.70 Z" fill="none" stroke="#e02428" stroke-width="1.05"/></svg>
<svg style="left:317px;top:92.7px" width="3.2" height="3.2" viewBox="0 0 3.2 3.2"><path d="M3.2 0 V3.2 H0Z" fill="#111"/></svg>
<svg style="left:323.4px;top:80.4px" width="10" height="14" viewBox="0 0 10 14"><path d="M2.4 0.8 H7.6 L7 2.4 V5.4 L9.2 7.6 V8.6 H0.8 V7.6 L3 5.4 V2.4Z" fill="#2850d0" stroke="#1a3494" stroke-width="0.5"/><path d="M5 8.6 V13.4" stroke="#1a3494" stroke-width="0.9"/></svg>
<svg style="left:333px;top:92.7px" width="3.2" height="3.2" viewBox="0 0 3.2 3.2"><path d="M3.2 0 V3.2 H0Z" fill="#111"/></svg>
<div class="a sep" style="left:337.5px;top:79.9px;"></div>
<svg style="left:341.6px;top:80.4px" width="14" height="14" viewBox="0 0 14 14"><path d="M3 8.6 L10 0.8 L12.6 3 L5.6 10.6Z" fill="#58b868" stroke="#2a7a3a" stroke-width="0.5"/><path d="M10 0.8 L12.6 3 L11.4 4.2 L8.8 2Z" fill="#e86060"/><path d="M3 8.6 L5.6 10.6 L2 11.8Z" fill="#e8c8a0" stroke="#555" stroke-width="0.4"/><path d="M0.8 12.6 C2 10.6 3 13.6 4.2 12 C5.4 10.6 6 13.4 7.4 12.2 C8.4 11.4 9 12.6 10 12.4" fill="none" stroke="#e02428" stroke-width="0.9"/></svg>
<svg style="left:354px;top:92.7px" width="3.2" height="3.2" viewBox="0 0 3.2 3.2"><path d="M3.2 0 V3.2 H0Z" fill="#111"/></svg>
<svg style="left:361px;top:81.4px" width="14" height="12" viewBox="0 0 14 12"><g transform="rotate(-35 7 6)"><rect x="0.6" y="3" width="12.8" height="6" rx="3" fill="#e8b810" stroke="#9a7a08" stroke-width="0.6"/><path d="M8.4 3 H10.4 A3 3 0 0 1 10.4 9 H8.4Z" fill="#d8ddf0" stroke="#8890b0" stroke-width="0.5"/></g></svg>
<div class="a sep" style="left:377.5px;top:79.9px;"></div>
<svg style="left:381.4px;top:80.4px" width="14" height="14" viewBox="0 0 14 14"><circle cx="4.2" cy="2.8" r="2.2" fill="#e8b820" stroke="#a07c10" stroke-width="0.5"/><path d="M3.4 4.4 L7.6 8.4 L9.4 6.8 L5.4 3.2Z" fill="#e8b820" stroke="#a07c10" stroke-width="0.5"/><path d="M5 10.2 L10.6 5.4 L13 8.4 L7.4 13Z" fill="#f0d048" stroke="#a07c10" stroke-width="0.5"/><path d="M5 10.2 L7.4 13 L6.8 13.6 L4.4 10.8Z" fill="#c83020"/></svg>
<div class="a box" style="left:397.4px;top:80.6px;width:50.6px;height:13.4px;"></div>
<svg style="left:416px;top:81.6px" width="12" height="12" viewBox="0 0 12 12"><path d="M3 1 H9 V6 L6 11 L3 6Z M3 3.4 H9 M4.4 1 V6" fill="none" stroke="#e2e2e2" stroke-width="0.6" stroke-dasharray="1 0.8"/></svg>
<div class="a dd" style="left:448.6px;top:86.3px;border-top-color:#1a1a1a;"></div>
<div class="a chev" style="left:455.4px;top:91px;"></div>
<div class="a grip" style="left:465.6px;top:82.8px;"></div>
<svg style="left:474.6px;top:80.8px" width="15" height="13" viewBox="0 0 15 13"><path d="M2 1.2 H9 L11.4 8 H4Z" fill="#4880e8" stroke="#2854b8" stroke-width="0.5" /><ellipse cx="8.4" cy="9.4" rx="4.6" ry="2.6" fill="#d4d4d4" stroke="#555" stroke-width="0.8"/><ellipse cx="8.4" cy="9" rx="2.6" ry="1.3" fill="#f4f4f4" stroke="#666" stroke-width="0.5"/></svg>
<svg style="left:493px;top:80.8px" width="15" height="13" viewBox="0 0 15 13"><path d="M2 1.2 H9 L11.4 8 H4Z" fill="#4880e8" stroke="#2854b8" stroke-width="0.5" transform="rotate(-28 7 5)"/><ellipse cx="8.4" cy="9.4" rx="4.6" ry="2.6" fill="#d4d4d4" stroke="#555" stroke-width="0.8"/><ellipse cx="8.4" cy="9" rx="2.6" ry="1.3" fill="#f4f4f4" stroke="#666" stroke-width="0.5"/></svg>
<div class="a chev" style="left:510px;top:91px;"></div>
<div class="a grip" style="left:518.6px;top:82.8px;"></div>
<svg style="left:527.6px;top:81.8px" width="11" height="11" viewBox="0 0 11 11"><path d="M2.4 8.6 L8.6 2.4" stroke="#e02428" stroke-width="1.3"/><path d="M0.6 10.4 L1.4 6.6 L4.4 9.6Z M10.4 0.6 L9.6 4.4 L6.6 1.4Z" fill="#e02428"/></svg>
<svg style="left:539px;top:92.7px" width="3.2" height="3.2" viewBox="0 0 3.2 3.2"><path d="M3.2 0 V3.2 H0Z" fill="#111"/></svg>
<svg style="left:546px;top:81px" width="13" height="13" viewBox="0 0 13 13"><path d="M2 4.4 L4.4 1 L7.2 3.4 L10 1.4 L11.6 5.6 L9.4 7.4 L10.8 10.6 L6.8 11.6 L5 9.4 L2 10.2 L3.4 6.8Z" fill="#fff" stroke="#e02428" stroke-width="1.1" stroke-dasharray="2 0.9"/><path d="M8.6 11 L12 12.4 L11.4 8.8Z" fill="#e02428"/></svg>
<svg style="left:558.5px;top:92.7px" width="3.2" height="3.2" viewBox="0 0 3.2 3.2"><path d="M3.2 0 V3.2 H0Z" fill="#111"/></svg>
<svg style="left:563.6px;top:81px" width="14" height="13" viewBox="0 0 14 13"><path d="M4 1 L10 1 L13 5 L11.4 10.4 L6 12 L1.4 8.8 L1.2 4Z" fill="#f4a0a0" stroke="#e02428" stroke-width="1.1" stroke-dasharray="1.8 0.8"/><path d="M3 8.6 L9 2.6 M4.6 10 L11 3.8 M6.6 10.8 L12 5.6 M2 6.4 L6.6 2" stroke="#e02428" stroke-width="0.8"/></svg>
<svg style="left:577.5px;top:92.7px" width="3.2" height="3.2" viewBox="0 0 3.2 3.2"><path d="M3.2 0 V3.2 H0Z" fill="#111"/></svg>
<div class="a chev" style="left:582.6px;top:91px;"></div>
<div class="a grip" style="left:8.6px;top:101.6px;"></div>
<div class="a box" style="left:16px;top:99.8px;width:85.4px;height:13px;"></div>
<div class="t" style="left:18.6px;top:100.2px;font-size:8.9px;transform:scaleX(0.989);">Arial</div>
<div class="a dd" style="left:105px;top:105.1px;border-top-color:#1a1a1a;"></div>
<div class="a box" style="left:114.6px;top:99.8px;width:21px;height:13px;"></div>
<div class="t" style="left:117px;top:100.2px;font-size:8.9px;transform:scaleX(0.849);">12</div>
<div class="a dd" style="left:139px;top:105.1px;border-top-color:#1a1a1a;"></div>
<svg style="left:151px;top:99.2px" width="12" height="14" viewBox="0 0 12 14"><text x="6" y="10.8" font-size="11" font-family="Liberation Serif,serif" text-anchor="middle" fill="#3366c4" font-weight="bold">B</text></svg>
<svg style="left:169px;top:99.2px" width="12" height="14" viewBox="0 0 12 14"><text x="6" y="10.8" font-size="11" font-family="Liberation Serif,serif" text-anchor="middle" fill="#3366c4" font-style="italic" font-weight="bold">I</text></svg>
<svg style="left:186.6px;top:99.2px" width="12" height="14" viewBox="0 0 12 14"><text x="6" y="10.8" font-size="11" font-family="Liberation Serif,serif" text-anchor="middle" fill="#3366c4" font-weight="bold">U</text><path d="M2.4 12.2 H9.6" stroke="#3366c4" stroke-width="0.8"/></svg>
<svg style="left:205.6px;top:99.2px" width="12" height="14" viewBox="0 0 12 14"><text x="6" y="10.8" font-size="11" font-family="Liberation Serif,serif" text-anchor="middle" fill="#3366c4" font-weight="bold">S</text><path d="M1.6 7.2 H10.4" stroke="#3366c4" stroke-width="0.8"/></svg>
<div class="a" style="left:225.6px;top:98.4px;width:16.4px;height:16.2px;background:linear-gradient(180deg,#fdeeb8,#f9d670);border:1px solid #c9a64a;border-radius:2px;"></div>
<svg style="left:228px;top:100.8px" width="12" height="11" viewBox="0 0 12 11"><rect x="0.8" y="0.8" width="10.4" height="1.3" fill="#4a78c8"/><rect x="0.8" y="3" width="7.4" height="1.3" fill="#4a78c8"/><rect x="0.8" y="5.2" width="10.4" height="1.3" fill="#4a78c8"/><rect x="0.8" y="7.4" width="7.4" height="1.3" fill="#4a78c8"/><rect x="0.8" y="9.6" width="10.4" height="1.3" fill="#4a78c8"/></svg>
<svg style="left:246.4px;top:100.8px" width="12" height="11" viewBox="0 0 12 11"><rect x="0.8" y="0.8" width="10.4" height="1.3" fill="#4a78c8"/><rect x="2.3" y="3" width="7.4" height="1.3" fill="#4a78c8"/><rect x="0.8" y="5.2" width="10.4" height="1.3" fill="#4a78c8"/><rect x="2.3" y="7.4" width="7.4" height="1.3" fill="#4a78c8"/><rect x="0.8" y="9.6" width="10.4" height="1.3" fill="#4a78c8"/></svg>
<svg style="left:265px;top:100.8px" width="12" height="11" viewBox="0 0 12 11"><rect x="0.8" y="0.8" width="10.4" height="1.3" fill="#4a78c8"/><rect x="3.8" y="3" width="7.4" height="1.3" fill="#4a78c8"/><rect x="0.8" y="5.2" width="10.4" height="1.3" fill="#4a78c8"/><rect x="3.8" y="7.4" width="7.4" height="1.3" fill="#4a78c8"/><rect x="0.8" y="9.6" width="10.4" height="1.3" fill="#4a78c8"/></svg>
<svg style="left:284.4px;top:99.2px" width="14" height="14" viewBox="0 0 14 14"><path d="M2.6 9.6 L6.6 1.2 L8.6 9.6" fill="none" stroke="#3a68b8" stroke-width="1.5"/><path d="M5 8 L11.6 1 L12.8 2 L7 9.4Z" fill="#e87820" stroke="#a85010" stroke-width="0.4"/><rect x="0.8" y="10.2" width="12.4" height="3.2" fill="#111"/></svg>
<div class="a dd" style="left:301px;top:105.1px;border-top-color:#1a1a1a;"></div>
<div class="t" style="left:312.4px;top:100.2px;font-size:8.9px;transform:scaleX(0.992);">Make Default</div>
<div class="a chev" style="left:366.4px;top:110px;"></div>
<div class="a" id="doc" style="left:6px;top:116.4px;width:576px;height:299.2px;background:linear-gradient(180deg,#7c7c7c 0,#8d8d8d 18%,#9a9a9a 33%,#a1a1a1 48%,#a2a2a2 75%,#9b9b9b 100%);overflow:hidden"></div>
<svg style="left:6px;top:116.4px" width="576" height="299.2"><defs><pattern id="chk" width="3" height="3" patternUnits="userSpaceOnUse"><rect x="0" y="0" width="1.5" height="1.5" fill="#fff" opacity="0.10"/><rect x="1.5" y="1.5" width="1.5" height="1.5" fill="#fff" opacity="0.10"/><rect x="1.5" y="0" width="1.5" height="1.5" fill="#000" opacity="0.07"/><rect x="0" y="1.5" width="1.5" height="1.5" fill="#000" opacity="0.07"/></pattern></defs><rect width="100%" height="100%" fill="url(#chk)"/></svg>
<div class="a" style="left:6px;top:415.4px;width:5.4px;height:12.2px;background:#989898;"></div>
<div class="a" style="left:6px;top:116.4px;width:5.4px;height:311.2px;background:rgba(255,255,255,0.06);border-right:1px solid rgba(60,60,60,0.55);"></div>
<div class="a" style="left:6.2px;top:261px;width:3.8px;height:21.6px;background:#f4f4f4;border-radius:1.8px;box-shadow:0 0 0.6px #999;"></div>
<svg style="left:7px;top:269.6px" width="3" height="4" viewBox="0 0 3 4"><path d="M0.2 0 L2.6 2 L0.2 4Z" fill="#111"/></svg>
<div class="a" style="left:172px;top:118.4px;width:249.7px;height:297.2px;background:#2b2b2b;border-radius:1.6px 1.6px 0 0;"></div>
<div class="a" style="left:173.2px;top:119.6px;width:246.8px;height:296px;background:#fff;border-radius:0.8px 0.8px 0 0;"></div>
<div class="a" style="left:6px;top:116.4px;width:576px;height:1px;background:rgba(30,30,30,0.55);"></div>
<svg style="left:0;top:0" width="600" height="452" viewBox="0 0 600 452"><defs><clipPath id="pg"><rect x="173.2" y="119.6" width="246.8" height="296"/></clipPath></defs>
<g clip-path="url(#pg)" fill="none" stroke="#111" stroke-linecap="butt" font-family="Liberation Sans,sans-serif">
<path d="M386.00 144.90 A155.7 155.7 0 0 0 290.14 423.29" stroke="#d2d2d2" stroke-width="5.2"/>
<path d="M386.00 143.60 A157 157 0 0 0 289.34 424.32" stroke="#161616" stroke-width="1.7" stroke-dasharray="1.3 1.5 1.7 1.3 1.6 1.9 0.9 2.2 0.9 2.1 0.9 1.4 1.4 2.9 1.0 1.6 1.7 3.1 1.6 2.0 2.2 1.3"/>
<path d="M386.00 145.00 A155.6 155.6 0 0 0 290.20 423.21" stroke="#161616" stroke-width="1.6" stroke-dasharray="2.0 1.8 1.0 1.4 1.2 2.8 1.1 2.4 1.7 1.9 1.6 1.3 0.9 1.6 1.8 2.1 1.2 2.4 1.4 1.8 1.9 2.6"/>
<path d="M386.00 146.40 A154.2 154.2 0 0 0 291.07 422.11" stroke="#161616" stroke-width="1.7" stroke-dasharray="1.1 2.3 1.5 3.0 1.8 1.8 2.2 1.4 1.4 2.7 1.0 2.2 0.9 2.5 1.9 2.3 2.0 1.8 1.8 2.4 1.6 2.1"/>
<path d="M408.06 143.64 A158.5 158.5 0 0 0 288.42 425.50" stroke-width="1"/>
<path d="M409.93 149.48 A153 153 0 0 0 291.80 421.17" stroke-width="1"/>
<path d="M409.53 152.05 A150.4 150.4 0 0 0 245.22 247.68" stroke-width="0.7" stroke="#222"/>
<path d="M234.33 245.40 A161.4 161.4 0 0 0 286.63 427.78" stroke-width="0.95"/>
<path d="M234.0 245.9 L236.9 246.9" stroke-width="0.8"/>
<path d="M386.00 164.00 A136.6 136.6 0 0 0 297.10 404.32" stroke-width="1.1"/>
<path d="M385.8 136.5 V416" stroke-width="1.3" stroke-dasharray="12.4 2.1 2.5 2.1" stroke="#1a1a1a"/>
<path d="M302.2 147.6 V416" stroke-width="1"/>
<path d="M298.6 150 V416" stroke-width="0.4" stroke="#c4c4c4"/>
<path d="M302.2 147.6 H339" stroke-width="0.6" stroke="#333"/>
<path d="M240 246.8 H385.8" stroke-width="1.35"/>
<path d="M220 246.8 H234.5" stroke-width="1.1"/>
<path d="M244 255.4 H385.8" stroke-width="1"/>
<path d="M233 303.2 H385.8" stroke-width="0.8"/>
<path d="M236 333.2 H385.8" stroke-width="1.3"/>
<path d="M215.8 333.4 H228.4" stroke-width="1.1"/>
<path d="M239 341.2 H385.8" stroke-width="1"/>
<path d="M288.6 409.8 H385.8" stroke-width="1"/>
<rect x="240.6" y="248" width="3.8" height="7.4" fill="#111" stroke="none"/>
<path d="M243 248 L258 254" stroke-width="0.7"/><path d="M258 247 V255.4" stroke-width="0.5"/>
<rect x="234.6" y="333" width="5.6" height="9.6" fill="#1a1a1a" stroke="none"/>
<path d="M231 328.3 L251.6 325.8" stroke-width="0.8"/>
<path d="M297.1 404.3 L288.6 409.8" stroke-width="0.9"/>
<path d="M262 217.3 L273.5 227.3" stroke-width="0.8"/>
<path d="M224.8 227.5 H231 L242.3 249" stroke-width="0.9"/>
<path d="M209.4 240.5 H222.3 V246.8" stroke-width="0.9"/>
<path d="M277 227.3 H273.5" stroke-width="0.9"/>
<path d="M206.5 286.8 H213.8 L224.4 290" stroke-width="0.9"/>
<path d="M335 236 H331.4 L329.7 246.5" stroke-width="0.9"/>
<path d="M204.8 327.3 H218.2 V333.4" stroke-width="0.9"/>
<path d="M221.6 352 H224.8 L235 344" stroke-width="0.9"/>
<path d="M230.4 394.5 H235.3 L246 383" stroke-width="0.9"/>
<path d="M335 321.5 H331.4 L329.7 332.6" stroke-width="0.9"/>
<path d="M334.6 382.5 H332.6 L288 417" stroke-width="0.9"/>
<path d="M334.6 396 H331.6 L327.4 417" stroke-width="0.9"/>
<path d="M300 240 Q299.4 245 302 246.6" stroke-width="0.6"/>
<circle cx="302.2" cy="147.6" r="0.95" fill="#111" stroke="none"/>
<circle cx="385.8" cy="163.9" r="0.95" fill="#111" stroke="none"/>
<circle cx="302.2" cy="246.8" r="0.95" fill="#111" stroke="none"/>
<circle cx="302.2" cy="255.4" r="0.95" fill="#111" stroke="none"/>
<circle cx="385.8" cy="246.8" r="0.95" fill="#111" stroke="none"/>
<circle cx="385.8" cy="303.2" r="0.95" fill="#111" stroke="none"/>
<circle cx="302.2" cy="333.2" r="0.95" fill="#111" stroke="none"/>
<circle cx="302.2" cy="341.2" r="0.95" fill="#111" stroke="none"/>
<circle cx="385.8" cy="409.8" r="0.95" fill="#111" stroke="none"/>
<circle cx="302.2" cy="409.8" r="0.95" fill="#111" stroke="none"/>
<circle cx="251.6" cy="325.8" r="0.95" fill="#111" stroke="none"/>
<circle cx="297.1" cy="404.3" r="0.95" fill="#111" stroke="none"/>
<circle cx="329.7" cy="246.6" r="0.95" fill="#111" stroke="none"/>
<circle cx="329.7" cy="332.8" r="0.95" fill="#111" stroke="none"/>
<g><rect x="338.3" y="203.7" width="22.9" height="5.9" rx="1.2" fill="#fff" stroke="#c4c4c4" stroke-width="0.45"/><text x="349.8" y="207.8" font-size="3.2" text-anchor="middle" textLength="19.5" lengthAdjust="spacingAndGlyphs" fill="#333" stroke="none">BEDROOMS</text></g>
<g><rect x="338.2" y="279.4" width="27.4" height="6.2" rx="1.2" fill="#fff" stroke="#c4c4c4" stroke-width="0.45"/><text x="351.9" y="283.7" font-size="3.2" text-anchor="middle" textLength="24.0" lengthAdjust="spacingAndGlyphs" fill="#333" stroke="none">LIVING ROOM</text></g>
<g><rect x="338.7" y="358.2" width="22.3" height="6.6" rx="1.2" fill="#fff" stroke="#c4c4c4" stroke-width="0.45"/><text x="349.9" y="362.7" font-size="3.2" text-anchor="middle" textLength="18.9" lengthAdjust="spacingAndGlyphs" fill="#333" stroke="none">BASEMENT</text></g>
<g><rect x="194.3" y="225.8" width="30.5" height="11.2" rx="1.2" fill="#fff" stroke="#c4c4c4" stroke-width="0.45"/><text x="195.7" y="228.4" font-size="2.1" font-weight="bold" fill="#1c1c1c" stroke="none">1 NOTCH TIE WILL ELEVATE</text><text x="195.7" y="230.9" font-size="2.1" font-weight="bold" fill="#1c1c1c" stroke="none">LENGTH, USE ANCHOR</text><text x="195.7" y="233.4" font-size="2.1" font-weight="bold" fill="#1c1c1c" stroke="none">BOLT TO SHEET SETS CONC</text><text x="195.7" y="235.9" font-size="2.1" font-weight="bold" fill="#1c1c1c" stroke="none">SCREWS</text></g>
<g><rect x="194.3" y="238.7" width="15.1" height="3.9" rx="1.2" fill="#fff" stroke="#c4c4c4" stroke-width="0.45"/><text x="195.7" y="241.4" font-size="2" font-weight="bold" fill="#1c1c1c" stroke="none">FLOOR LEVEL</text></g>
<g><rect x="277.0" y="225.0" width="16.4" height="4.6" rx="1.2" fill="#fff" stroke="#c4c4c4" stroke-width="0.45"/><text x="278.4" y="228.1" font-size="2.1" font-weight="bold" fill="#1c1c1c" stroke="none">TURN SET A1</text></g>
<g><rect x="189.5" y="284.4" width="17.0" height="4.8" rx="1.2" fill="#fff" stroke="#c4c4c4" stroke-width="0.45"/><text x="190.9" y="287.6" font-size="2.1" font-weight="bold" fill="#1c1c1c" stroke="none">TURN SET A1</text></g>
<g><rect x="335.0" y="234.3" width="34.0" height="8.7" rx="1.2" fill="#fff" stroke="#c4c4c4" stroke-width="0.45"/><text x="336.4" y="236.9" font-size="2.05" font-weight="bold" fill="#1c1c1c" stroke="none">SET UP OUT TO RECEIVE</text><text x="336.4" y="239.4" font-size="2.05" font-weight="bold" fill="#1c1c1c" stroke="none">INSULATING LINE. 4" OF WEIGHT</text><text x="336.4" y="241.9" font-size="2.05" font-weight="bold" fill="#1c1c1c" stroke="none">STARTS @ 10" OC MAX</text></g>
<g><rect x="303.4" y="299.0" width="18.2" height="4.0" rx="1.2" fill="#fff" stroke="#c4c4c4" stroke-width="0.45"/><text x="304.8" y="301.7" font-size="2" font-weight="bold" fill="#1c1c1c" stroke="none">47'-0" RADIUS</text></g>
<g><rect x="189.5" y="325.0" width="15.3" height="4.6" rx="1.2" fill="#fff" stroke="#c4c4c4" stroke-width="0.45"/><text x="190.9" y="328.0" font-size="2" font-weight="bold" fill="#1c1c1c" stroke="none">FLOOR LEVEL</text></g>
<g><rect x="189.5" y="350.2" width="32.1" height="11.4" rx="1.2" fill="#fff" stroke="#c4c4c4" stroke-width="0.45"/><text x="190.9" y="352.8" font-size="2.1" font-weight="bold" fill="#1c1c1c" stroke="none">1 NOTCH TIE WILL ELEVATE</text><text x="190.9" y="355.4" font-size="2.1" font-weight="bold" fill="#1c1c1c" stroke="none">LENGTH, USE ANCHOR</text><text x="190.9" y="357.9" font-size="2.1" font-weight="bold" fill="#1c1c1c" stroke="none">BOLT TO SHEET SETS CONC</text><text x="190.9" y="360.5" font-size="2.1" font-weight="bold" fill="#1c1c1c" stroke="none">SCREWS</text></g>
<g><rect x="213.8" y="392.0" width="16.6" height="5.0" rx="1.2" fill="#fff" stroke="#c4c4c4" stroke-width="0.45"/><text x="215.2" y="395.3" font-size="2.1" font-weight="bold" fill="#1c1c1c" stroke="none">TURN SET A1</text></g>
<g><rect x="335.0" y="319.7" width="34.0" height="9.3" rx="1.2" fill="#fff" stroke="#c4c4c4" stroke-width="0.45"/><text x="336.4" y="322.4" font-size="2.05" font-weight="bold" fill="#1c1c1c" stroke="none">SET UP OUT TO RECEIVE</text><text x="336.4" y="325.1" font-size="2.05" font-weight="bold" fill="#1c1c1c" stroke="none">INSULATING LINE. 4" OF WEIGHT</text><text x="336.4" y="327.8" font-size="2.05" font-weight="bold" fill="#1c1c1c" stroke="none">STARTS @ 10" OC MAX</text></g>
<g><rect x="334.6" y="380.6" width="32.1" height="11.7" rx="1.2" fill="#fff" stroke="#c4c4c4" stroke-width="0.45"/><text x="336.0" y="383.3" font-size="2.1" font-weight="bold" fill="#1c1c1c" stroke="none">1 NOTCH TIE WILL ELEVATE</text><text x="336.0" y="385.9" font-size="2.1" font-weight="bold" fill="#1c1c1c" stroke="none">LENGTH, USE ANCHOR</text><text x="336.0" y="388.5" font-size="2.1" font-weight="bold" fill="#1c1c1c" stroke="none">BOLT TO SHEET SETS CONC</text><text x="336.0" y="391.1" font-size="2.1" font-weight="bold" fill="#1c1c1c" stroke="none">SCREWS</text></g>
<g><rect x="334.6" y="394.0" width="35.8" height="8.6" rx="1.2" fill="#fff" stroke="#c4c4c4" stroke-width="0.45"/><text x="336.0" y="396.6" font-size="2.05" font-weight="bold" fill="#1c1c1c" stroke="none">SET UP OUT TO RECEIVE</text><text x="336.0" y="399.0" font-size="2.05" font-weight="bold" fill="#1c1c1c" stroke="none">INSULATING LINE. 4-6 CLEAN FILL @</text><text x="336.0" y="401.5" font-size="2.05" font-weight="bold" fill="#1c1c1c" stroke="none">10" OC MAX</text></g>
<g><rect x="332.6" y="406.2" width="9.8" height="4.2" rx="1.2" fill="#fff" stroke="#c4c4c4" stroke-width="0.45"/><text x="334.0" y="409.0" font-size="2" font-weight="bold" fill="#1c1c1c" stroke="none">2'-6"</text></g>
<rect x="297.2" y="196.5" width="2.6" height="11.5" rx="1.2" fill="#fff" stroke="#c8c8c8" stroke-width="0.4"/><text transform="translate(299.2 202.2) rotate(-90)" font-size="1.9" fill="#555" stroke="none" text-anchor="middle">8'-0"</text>
<rect x="297.2" y="233.0" width="2.6" height="7.4" rx="1.2" fill="#fff" stroke="#c8c8c8" stroke-width="0.4"/><text transform="translate(299.2 236.7) rotate(-90)" font-size="1.9" fill="#555" stroke="none" text-anchor="middle">8'-0"</text>
<rect x="297.2" y="289.0" width="2.6" height="10.0" rx="1.2" fill="#fff" stroke="#c8c8c8" stroke-width="0.4"/><text transform="translate(299.2 294.0) rotate(-90)" font-size="1.9" fill="#555" stroke="none" text-anchor="middle">8'-0"</text>
<rect x="297.2" y="324.4" width="2.6" height="5.2" rx="1.2" fill="#fff" stroke="#c8c8c8" stroke-width="0.4"/><text transform="translate(299.2 327.0) rotate(-90)" font-size="1.9" fill="#555" stroke="none" text-anchor="middle">8'-0"</text>
<rect x="297.2" y="374.5" width="2.6" height="9.8" rx="1.2" fill="#fff" stroke="#c8c8c8" stroke-width="0.4"/><text transform="translate(299.2 379.4) rotate(-90)" font-size="1.9" fill="#555" stroke="none" text-anchor="middle">8'-0"</text>
<rect x="246.2" y="284.0" width="2.6" height="8.8" rx="1.2" fill="#fff" stroke="#c8c8c8" stroke-width="0.4"/><text transform="translate(248.2 288.4) rotate(-90)" font-size="1.9" fill="#555" stroke="none" text-anchor="middle">8'-0"</text>
<circle cx="237" cy="297.8" r="2.6" fill="#fff" stroke="#c4c4c4" stroke-width="0.4"/><path d="M233.4 298.4 L236.6 297.6" stroke-width="0.6"/>
<g transform="translate(269 367) rotate(62)"><rect x="-5" y="-1.6" width="10" height="3" rx="1.2" fill="#fff" stroke="#c8c8c8" stroke-width="0.4"/><text x="0" y="0.7" font-size="1.9" fill="#555" stroke="none" text-anchor="middle">47'-0" R</text></g>
<g transform="translate(309.5 184) rotate(-32)"><rect x="-4" y="-1.4" width="8" height="2.8" rx="1.2" fill="#fff" stroke="#d0d0d0" stroke-width="0.4"/><text x="0" y="0.7" font-size="1.8" fill="#777" stroke="none" text-anchor="middle">1'-6"</text></g>
</g></svg>
<div class="a" style="left:582px;top:116.4px;width:12px;height:299.2px;background:linear-gradient(90deg,#e4e4e4,#f3f3f3 30%,#f1f1f1);"></div>
<svg style="left:585.6px;top:120.6px" width="5" height="3" viewBox="0 0 5 3"><path d="M0 3 L2.5 0 L5 3Z" fill="#333"/></svg>
<div class="a" style="left:583.4px;top:129.2px;width:9.4px;height:208px;background:linear-gradient(90deg,#f6f6f6 0,#ebebeb 45%,#d9d9d9 100%);border:1px solid #b4b4b4;border-radius:1.5px;"></div>
<svg style="left:585.6px;top:230.4px" width="6" height="6" viewBox="0 0 6 6"><path d="M0 0.6 H5 M0 2.6 H5 M0 4.6 H5" stroke="#777" stroke-width="0.8"/><path d="M0 0.6 H1.4 M0 2.6 H1.4 M0 4.6 H1.4" stroke="#333" stroke-width="0.9"/></svg>
<svg style="left:585.6px;top:409.6px" width="5" height="3" viewBox="0 0 5 3"><path d="M0 0 L2.5 3 L5 0Z" fill="#333"/></svg>
<div class="a" style="left:11px;top:415.6px;width:583px;height:12px;background:linear-gradient(180deg,#fbfbfb,#ececec);"></div>
<div class="a" style="left:11px;top:416px;width:77px;height:11.6px;background:linear-gradient(180deg,#ffffff,#f3f3f3);border-right:1px solid #e0e0e0;"></div>
<div class="t" style="left:19.4px;top:415.8px;font-size:8.9px;transform:scaleX(0.888);">12.31 x 18.31 cm</div>
<svg style="left:92.8px;top:419.2px" width="3" height="5" viewBox="0 0 3 5"><path d="M3 0 L0 2.5 L3 5Z" fill="#6e6e6e"/></svg>
<svg style="left:574.6px;top:419px" width="3" height="5" viewBox="0 0 3 5"><path d="M0 0 L3 2.5 L0 5Z" fill="#999"/></svg>
<div class="a" style="left:6px;top:427.6px;width:588px;height:18px;background:linear-gradient(180deg,#f2f2f2,#e3e3e3);border-top:1px solid #e9e9e9;"></div>
<div class="a grip" style="left:8.6px;top:432.2px;"></div>
<svg style="left:17.6px;top:430.4px" width="10" height="13" viewBox="0 0 10 13"><path d="M1.6 0.6 V12.6" stroke="#555" stroke-width="1.2"/><path d="M2.2 1.2 C4 0.2 6 2 9.2 1 V7 C6 8 4 6.2 2.2 7.2Z" fill="#f2d010" stroke="#a88c08" stroke-width="0.5"/></svg>
<div class="t" style="left:30.8px;top:430.8px;font-size:8.9px;transform:scaleX(0.965);">Options</div>
<div class="a dd" style="left:65.4px;top:435.7px;border-top-color:#1a1a1a;"></div>
<div class="a grip" style="left:205.4px;top:432.2px;"></div>
<svg style="left:215.4px;top:431.4px" width="11.4" height="11" viewBox="0 0 11.4 11"><rect x="0.4" y="0.4" width="2.8" height="10.2" fill="#93bfee"/><path d="M11 0.4 V10.6 L3.6 5.5Z" fill="#93bfee"/></svg>
<svg style="left:234px;top:431.4px" width="10" height="11" viewBox="0 0 10 11"><path d="M9.6 0.4 V10.6 L0.6 5.5Z" fill="#93bfee"/></svg>
<div class="a" style="left:253.2px;top:430.4px;width:41.6px;height:12.8px;background:linear-gradient(180deg,#fafafa,#f1f1f1);border-bottom:1px solid #dcdcdc;"></div>
<div class="t" style="left:271.6px;top:430.8px;font-size:8.9px;transform:scaleX(0.849);color:#505050;-webkit-text-stroke:0;">1</div>
<div class="t" style="left:298px;top:430.8px;font-size:8.9px;transform:scaleX(0.943);">of 1</div>
<svg style="left:324px;top:431.4px" width="10" height="11" viewBox="0 0 10 11"><path d="M0.4 0.4 V10.6 L9.4 5.5Z" fill="#93bfee"/></svg>
<svg style="left:341px;top:431.4px" width="11.4" height="11" viewBox="0 0 11.4 11"><rect x="8.2" y="0.4" width="2.8" height="10.2" fill="#93bfee"/><path d="M0.4 0.4 V10.6 L7.8 5.5Z" fill="#93bfee"/></svg>
<svg style="left:360.4px;top:430.8px" width="12" height="12" viewBox="0 0 12 12"><g opacity="1"><circle cx="6" cy="6" r="5.5" fill="#3eb53a" stroke="#1f8a26" stroke-width="0.8"/><ellipse cx="6" cy="3.3" rx="4.32" ry="2.52" fill="#9be08c" opacity="0.75"/><path d="M2.5 6 L6.2 2.7 V4.8 H9.7 V7.2 H6.2 V9.3Z" fill="#fff"/></g></svg>
<svg style="left:379px;top:430.8px" width="12" height="12" viewBox="0 0 12 12"><g opacity="0.42"><circle cx="6" cy="6" r="5.5" fill="#3eb53a" stroke="#1f8a26" stroke-width="0.8"/><ellipse cx="6" cy="3.3" rx="4.32" ry="2.52" fill="#9be08c" opacity="0.75"/><path d="M9.5 6 L5.8 2.7 V4.8 H2.3 V7.2 H5.8 V9.3Z" fill="#fff"/></g></svg>
<div class="a grip" style="left:477.8px;top:432.2px;"></div>
<svg style="left:487.2px;top:430.4px" width="12" height="13" viewBox="0 0 12 13"><path d="M0.6 0.6 H7.6 L11 4 V12.4 H0.6Z" fill="#f6f9fd" stroke="#8ea6c6" stroke-width="0.7"/><path d="M7.6 0.6 V4 H11" fill="#dbe6f3" stroke="#8ea6c6" stroke-width="0.5"/></svg>
<div class="a" style="left:503px;top:428.4px;width:17.4px;height:17.2px;background:linear-gradient(180deg,#fdeeb8,#f9d670);border:1px solid #c9a64a;border-radius:2px;"></div>
<svg style="left:505.6px;top:430.4px" width="12" height="13" viewBox="0 0 12 13"><path d="M0.6 0.4 H11.4 V5 H0.6Z" fill="#f6f9fd" stroke="#8ea6c6" stroke-width="0.7"/><path d="M0.6 6.4 H8.4 L11.4 9.4 V12.6 H0.6Z" fill="#f6f9fd" stroke="#8ea6c6" stroke-width="0.7"/><path d="M0.8 5.6 H11.2" stroke="#3a6ac0" stroke-width="1.1"/><path d="M0.6 0.4 V12.6" stroke="#3a6ac0" stroke-width="0.9"/><path d="M11.4 0.4 V5" stroke="#3a6ac0" stroke-width="0.9"/></svg>
<svg style="left:523px;top:432.2px" width="14" height="10" viewBox="0 0 14 10"><path d="M0.6 1 H4.2 L6.6 3.4 V9.4 H0.6Z" fill="#f6f9fd" stroke="#8ea6c6" stroke-width="0.7"/><path d="M7.4 1 H11 L13.4 3.4 V9.4 H7.4Z" fill="#f6f9fd" stroke="#8ea6c6" stroke-width="0.7"/></svg>
<svg style="left:541.6px;top:430.4px" width="14" height="13" viewBox="0 0 14 13"><path d="M0.6 0.4 H6 V5 H0.6Z M8 0.4 H13.4 V5 H8Z M0.6 7 H4.4 L6 8.6 V12.6 H0.6Z M8 7 H11.8 L13.4 8.6 V12.6 H8Z" fill="#f6f9fd" stroke="#8ea6c6" stroke-width="0.7"/><path d="M0.4 5.9 H13.6" stroke="#3a6ac0" stroke-width="1"/><path d="M4 7.6 L6 9.6 M10.4 7.6 L12.4 9.6" stroke="#3a6ac0" stroke-width="0.8"/></svg>
<div class="a grip" style="left:560.2px;top:432.2px;"></div>
<svg style="left:569.4px;top:430.4px" width="13" height="13" viewBox="0 0 13 13"><rect x="0.6" y="0.6" width="11.8" height="11.8" rx="1" fill="#fbfbfb" stroke="#6a6a6a" stroke-width="0.8"/><path d="M0.6 0.6 V12.4" stroke="#333" stroke-width="1.4"/><path d="M3 10 C5 8 6.4 5 6 2.6 C5.8 1.6 7.2 1.8 7 3 C6.6 5.4 8.6 7.6 10.6 8.4 C11.6 8.8 11 9.6 10 9.2 C7.6 8.2 5.4 8.6 3 10Z" fill="none" stroke="#d82020" stroke-width="0.9"/><path d="M0.6 10.6 H12.4 V12.4 H0.6Z" fill="#d4d4d4"/></svg>
<div class="a dd" style="left:586.8px;top:435.7px;border-top-color:#1a1a1a;"></div>
<svg style="left:0;top:0" width="600" height="452" viewBox="0 0 600 452"><path d="M226 188.2 L426.4 178.4 V202 Z" fill="#ffff20" opacity="0.6"/><path d="M222.6 178.8 H237 Q239.4 178.8 239.4 181.2 V188.8 Q239.4 191.2 237 191.2 H230 L225.6 195.2 L226.6 191.2 H222.6 Q220.2 191.2 220.2 188.8 V181.2 Q220.2 178.8 222.6 178.8Z" fill="#f6ee10" stroke="#fff" stroke-width="2.4"/><path d="M222.6 178.8 H237 Q239.4 178.8 239.4 181.2 V188.8 Q239.4 191.2 237 191.2 H230 L225.6 195.2 L226.6 191.2 H222.6 Q220.2 191.2 220.2 188.8 V181.2 Q220.2 178.8 222.6 178.8Z" fill="none" stroke="#6aa8e8" stroke-width="2.4" stroke-dasharray="1.6 1.6"/><path d="M222.6 178.8 H237 Q239.4 178.8 239.4 181.2 V188.8 Q239.4 191.2 237 191.2 H230 L225.6 195.2 L226.6 191.2 H222.6 Q220.2 191.2 220.2 188.8 V181.2 Q220.2 178.8 222.6 178.8Z" fill="#f8f010" stroke="#6a6408" stroke-width="0.8"/><path d="M223.2 181.4 H236.4 M223.2 183.7 H236.4 M223.2 186 H236.4 M223.2 188.3 H236.4" stroke="#7a7410" stroke-width="0.8"/></svg>
<div class="a" style="left:425.5px;top:152.5px;width:141.6px;height:75.8px;background:#fcfc00;box-shadow:0 0 0 0.7px #3a3a5c,1px 3px 3px 0.5px rgba(0,0,0,0.55);"></div>
<div class="a" style="left:428.4px;top:155px;width:135.8px;height:17.6px;background:linear-gradient(180deg,#f4f028 0,#e6e214 55%,#dcd808 100%);border-radius:2.2px;"></div>
<svg style="left:431px;top:158px" width="13" height="12" viewBox="0 0 13 12"><path d="M2 0.8 H10.6 Q12.2 0.8 12.2 2.4 V7 Q12.2 8.6 10.6 8.6 H5.6 L2.6 11.2 L3.2 8.6 H2 Q0.6 8.6 0.6 7 V2.4 Q0.6 0.8 2 0.8Z" fill="#fbf73a" stroke="#4a4800" stroke-width="0.9"/></svg>
<div class="t" style="left:447.6px;top:157.9px;font-size:8.8px;transform:scaleX(0.919);color:#1c1c1c;">Sean 15/09/2017, 9:38:...</div>
<svg style="left:549px;top:157.8px" width="12.4" height="12.4" viewBox="0 0 12.4 12.4"><circle cx="6.2" cy="6.2" r="5.8" fill="#dcd810" stroke="#c4c000" stroke-width="0.6"/><circle cx="6.2" cy="6.2" r="4.6" fill="#e4e018"/><path d="M4.3 4.3 L8.1 8.1 M8.1 4.3 L4.3 8.1" stroke="#111" stroke-width="1.4"/></svg>
<div class="a" style="left:428.6px;top:175px;width:135px;height:49.6px;background:#fff;border-radius:1.5px;outline:0.7px dotted #555;outline-offset:-0.9px;"></div>
<div class="a" style="left:431.2px;top:176.8px;width:63.2px;height:11.6px;background:#a9cce8;"></div>
<div class="t" style="left:431.4px;top:176.8px;font-size:11.3px;transform:scaleX(1.010);color:#111;line-height:12px;">Sample Text</div>
<div class="a" style="left:494.4px;top:177.4px;width:0.8px;height:11.4px;background:#111;"></div>
<div class="a" style="left:3px;top:95px;width:369.8px;height:23px;border:2px solid #de444c;border-bottom-color:#b41c24;border-radius:2.5px;"></div>
</body></html>
